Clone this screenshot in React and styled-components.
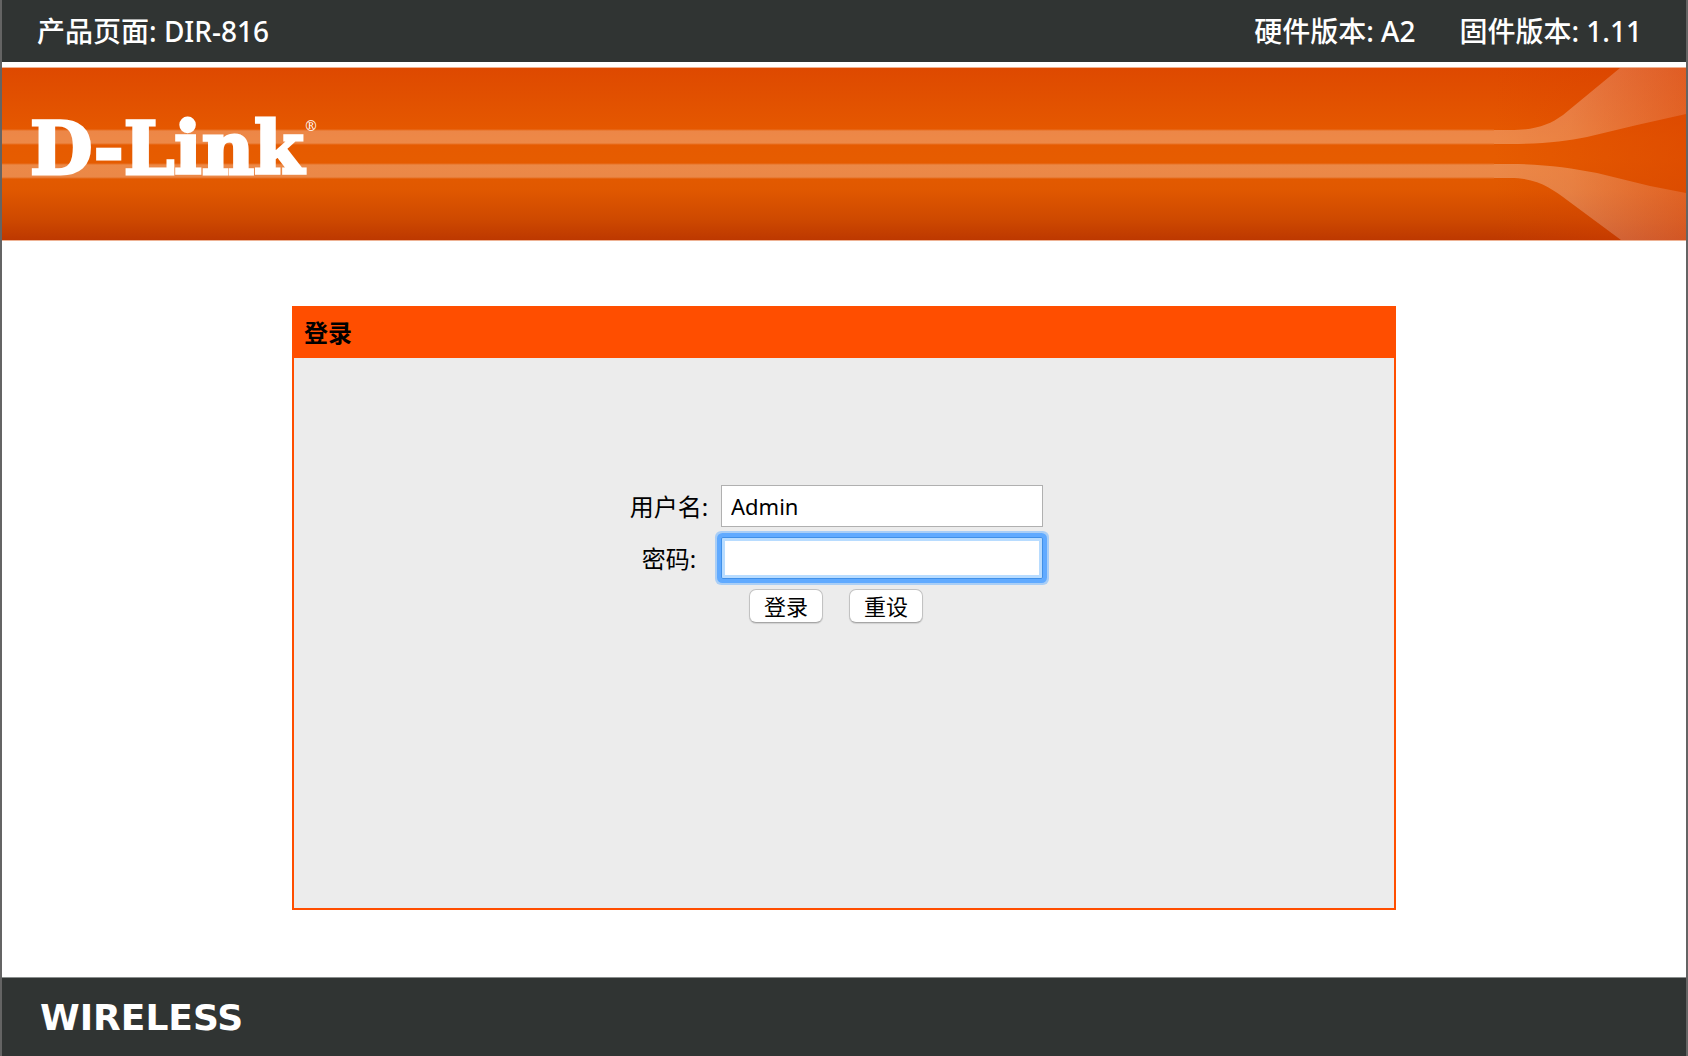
import React, { useState } from "react";
import styled, { createGlobalStyle } from "styled-components";

const GlobalStyle = createGlobalStyle`
  *, *::before, *::after { box-sizing: border-box; }
  body {
    margin: 0;
    background: #ffffff;
    color: #000000;
    font-family: "Noto Sans", "Noto Sans CJK SC", sans-serif;
  }
`;

const Page = styled.div`
  display: flex;
  flex-direction: column;
  min-height: 100vh;
  border: solid #646464;
  border-width: 0 2px;
`;

const TopBar = styled.header`
  display: flex;
  justify-content: space-between;
  align-items: center;
  height: 62px;
  padding: 0 44px 0 35px;
  background: #303433;
  color: #ffffff;
  font-size: 28px;
  font-weight: 500;
  line-height: 40px;
`;

const Versions = styled.div`
  display: flex;
  gap: 44px;
`;

const Banner = styled.div`
  display: flex;
  justify-content: space-between;
  height: 174px;
  margin-top: 5px;
  border: solid #eeb294;
  border-width: 1px 0;
  background:
    linear-gradient(
      to bottom,
      transparent 61px,
      rgba(255, 255, 255, 0.28) 63px,
      rgba(255, 255, 255, 0.28) 75px,
      transparent 77px,
      transparent 95px,
      rgba(255, 255, 255, 0.28) 97px,
      rgba(255, 255, 255, 0.28) 109px,
      transparent 111px
    ) left top / calc(100% - 192px) 100% no-repeat,
    linear-gradient(to bottom, #de4900 0, #e65a00 70px, #e65c00 90px, #e05800 122px, #cf4a00 150px, #bd3800 172px);
`;

const Brand = styled.a`
  display: flex;
  align-items: flex-start;
  padding: 42px 0 0 28px;
  color: #ffffff;
  text-decoration: none;
  font-family: "DejaVu Serif", serif;
`;

const BrandName = styled.span`
  font-size: 72px;
  font-weight: 700;
  line-height: 78px;
  -webkit-text-stroke: 3px #ffffff;
`;

const Registered = styled.span`
  font-size: 14px;
  line-height: 32px;
`;

const Swoosh = styled.svg`
  flex: none;
  width: 192px;
  height: 172px;
`;

const Main = styled.main`
  flex: 1;
  padding: 65px 24px 67px;
`;

const Panel = styled.section`
  max-width: 1104px;
  margin: 0 auto;
  border: 2px solid #ff4e00;
  background: #ececec;
`;

const PanelTitle = styled.h1`
  margin: 0;
  padding: 9px 10px;
  background: #ff4e00;
  font-size: 24px;
  font-weight: 700;
  line-height: 32px;
`;

const LoginForm = styled.form`
  display: grid;
  grid-template-columns: 80px 322px;
  gap: 10px 12px;
  justify-content: center;
  align-content: start;
  align-items: center;
  min-height: 550px;
  padding: 127px 16px 32px 0;
`;

const Label = styled.label`
  padding-top: 2px;
  font-size: 24px;
  line-height: 32px;
  text-align: center;
  white-space: nowrap;
`;

const Field = styled.input`
  width: 100%;
  height: 42px;
  padding: 0 9px;
  border: 1px solid #b0b0b0;
  border-radius: 0;
  background: #ffffff;
  color: #000000;
  font-family: inherit;
  font-size: 22px;
  outline: none;

  &:focus {
    border-color: #4090e8;
    border-radius: 2px;
    box-shadow: inset 0 0 0 3px #b8dcff, 0 0 0 4px #60aaff, 0 0 0 6px #a9cef6;
  }
`;

const Actions = styled.div`
  grid-column: 1 / -1;
  display: flex;
  justify-content: center;
  gap: 26px;
`;

const Button = styled.button`
  width: 74px;
  height: 34px;
  padding: 0;
  border: 1px solid #c2c2c2;
  border-bottom-color: #a6a6a6;
  border-radius: 7px;
  background: #ffffff;
  box-shadow: 0 1px 1px rgba(0, 0, 0, 0.12);
  color: #000000;
  font-family: inherit;
  font-size: 22px;
  line-height: 30px;
`;

const Footer = styled.footer`
  display: flex;
  align-items: center;
  height: 79px;
  padding: 2px 38px 0;
  border-top: 1px solid #8a8e8d;
  background: #303433;
  color: #ffffff;
  font-family: "DejaVu Sans", sans-serif;
  font-size: 36px;
  font-weight: 700;
  line-height: 40px;
`;

function BannerSwoosh() {
  return (
    <Swoosh viewBox="0 0 192 172" aria-hidden="true">
      <defs>
        <linearGradient id="ribbon" x1="0" y1="0" x2="192" y2="0" gradientUnits="userSpaceOnUse">
          <stop offset="0" stopColor="#fff" stopOpacity="0.28" />
          <stop offset="0.4" stopColor="#fff" stopOpacity="0.26" />
          <stop offset="1" stopColor="#f8dce0" stopOpacity="0.16" />
        </linearGradient>
        <linearGradient id="shade" x1="0" y1="0" x2="192" y2="0" gradientUnits="userSpaceOnUse">
          <stop offset="0" stopColor="#d84000" stopOpacity="0" />
          <stop offset="1" stopColor="#d84000" stopOpacity="0.5" />
        </linearGradient>
      </defs>
      <rect width="192" height="172" fill="url(#shade)" />
      <path fill="url(#ribbon)" d="M0 62H16C42 62 55 57 69 47L126 0H192V46L143 57L93 69C72 73 50 76 16 76H0Z" />
      <path fill="url(#ribbon)" d="M0 96H16C50 96 76 100 103 105L156 118L192 125V172H127L73 132C58 121 44 110 16 110H0Z" />
    </Swoosh>
  );
}

export default function App() {
  const [username, setUsername] = useState("Admin");
  const [password, setPassword] = useState("");

  const reset = () => {
    setUsername("Admin");
    setPassword("");
  };

  return (
    <>
      <GlobalStyle />
      <Page>
        <TopBar>
          <span>产品页面: DIR-816</span>
          <Versions>
            <span>硬件版本: A2</span>
            <span>固件版本: 1.11</span>
          </Versions>
        </TopBar>
        <Banner>
          <Brand href="#">
            <BrandName>D-Link</BrandName>
            <Registered>®</Registered>
          </Brand>
          <BannerSwoosh />
        </Banner>
        <Main>
          <Panel>
            <PanelTitle>登录</PanelTitle>
            <LoginForm onSubmit={(e) => e.preventDefault()} onReset={reset}>
              <Label htmlFor="username">用户名:</Label>
              <Field id="username" value={username} onChange={(e) => setUsername(e.target.value)} />
              <Label htmlFor="password">密码:</Label>
              <Field
                id="password"
                type="password"
                autoFocus
                value={password}
                onChange={(e) => setPassword(e.target.value)}
              />
              <Actions>
                <Button type="submit">登录</Button>
                <Button type="reset">重设</Button>
              </Actions>
            </LoginForm>
          </Panel>
        </Main>
        <Footer>WIRELESS</Footer>
      </Page>
    </>
  );
}
